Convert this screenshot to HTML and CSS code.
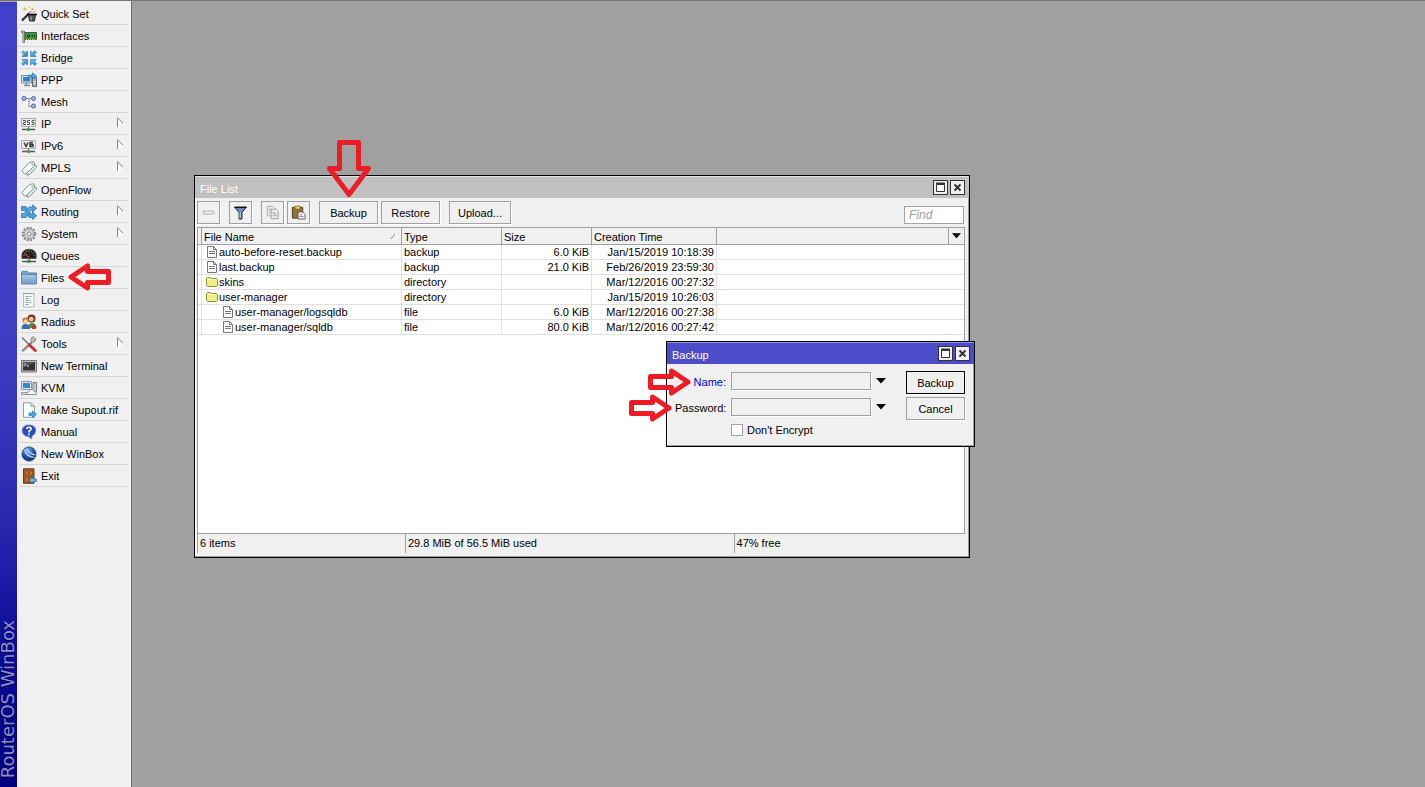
FILE: index.html
```
<!DOCTYPE html>
<html lang="en">
<head>
    <meta charset="utf-8">
    <meta name="viewport" content="width=device-width, initial-scale=1.0">
    <title>RouterOS WinBox</title>
    <link rel="stylesheet" href="styles.css">
</head>
<body>
    <!-- Shared icons -->
    <svg class="defs" aria-hidden="true">
        <defs>
            <linearGradient id="blue" x1="0" y1="0" x2="1" y2="1">
                <stop offset="0" stop-color="#8fd0f5"/>
                <stop offset="1" stop-color="#1d78c8"/>
            </linearGradient>
            <linearGradient id="folderBlue" x1="0" y1="0" x2="0" y2="1">
                <stop offset="0" stop-color="#a9c8e6"/>
                <stop offset="1" stop-color="#6f9bc8"/>
            </linearGradient>
            <radialGradient id="ball" cx="0.4" cy="0.25" r="0.8">
                <stop offset="0" stop-color="#7fb2ee"/>
                <stop offset="0.5" stop-color="#2358b4"/>
                <stop offset="1" stop-color="#0a2462"/>
            </radialGradient>
        </defs>
        <symbol id="tag" viewBox="0 0 16 16">
            <path d="M6 12.5 13.5 5l1.700.3.3 2L8.500 14.500 6 15.200z" fill="#dfeae8" stroke="#7d9490"/>
            <path d="M.8 10.500 8.500 2.600 12 1.800l1.700 1.200-.7 3.200L5 13.800 3.600 14z" fill="#f4faf9" stroke="#7d9490"/>
            <circle cx="11.300" cy="4.300" r=".9" fill="#7d9490"/>
        </symbol>
        <symbol id="doc" viewBox="0 0 12 12">
            <path d="M1.500.5h6l3 3v8h-9z" fill="#fff" stroke="#777"/>
            <path d="M7.500.5v3h3M3 5.500h6M3 7.500h6" fill="none" stroke="#777"/>
        </symbol>
        <symbol id="dir" viewBox="0 0 12 12">
            <path d="M.5 2.500 1.500 1.500h3l1 1h5l1 1v6l-1 1h-9l-1-1z" fill="#f0ee84" stroke="#8f8d3a"/>
            <path d="M1.500 3.500h8" stroke="#fbfac4"/>
        </symbol>
        <symbol id="sub" viewBox="0 0 7 11">
            <path d="M1 1 6 6.500 1 10z" fill="#f8f8f8"/>
            <path d="M1 10.500 6.500 6.500" fill="none" stroke="#fff"/>
            <path d="M.5 10V.8L6 6" fill="none" stroke="#888"/>
        </symbol>
        <symbol id="max" viewBox="0 0 11 11">
            <path d="M1.500 2.500h8v7h-8z" fill="#fff" stroke="#333"/>
            <path d="M1 1.500h9" stroke="#333" stroke-width="2"/>
        </symbol>
        <symbol id="close" viewBox="0 0 11 11">
            <path d="M2.500 2.500l6 6M8.500 2.500l-6 6" stroke="#333" stroke-width="2"/>
        </symbol>
        <symbol id="drop" viewBox="0 0 10 6">
            <path d="M0 0h10L5 5.500z" fill="#000"/>
        </symbol>
        <symbol id="pointer" viewBox="0 0 44 28">
            <path d="M2.500 8.500h21V3L40 14 23.500 25V19.500H2.500z" fill="none" stroke="#ed1c24" stroke-width="5" stroke-linejoin="round"/>
        </symbol>
    </svg>

    <div class="app">
        <div class="brand"><span>RouterOS WinBox</span></div>

        <!-- Main menu -->
        <nav class="menu">
            <button class="item" type="button">
                <svg class="icon" viewBox="0 0 16 16"><path d="M1 14.500 8.500 7" stroke="#333" stroke-width="2.400"/><path d="M8 7.500 10.500 5" stroke="#bbb" stroke-width="2"/><path d="M7.500 8.500h7L13.500 15H8.500z" fill="#555" stroke="#222"/><path d="M6 8.500h10" stroke="#111" stroke-width="1.600"/><path d="M10 10.500v4" stroke="#bbb"/><path d="M4 1v4M2 3h4M11.500 1.500v3M10 3h3M8 .5v1.500" stroke="#e0b83a"/><path d="M12 7l2.500-2" stroke="#888"/></svg>
                <span>Quick Set</span>
            </button>
            <button class="item" type="button">
                <svg class="icon" viewBox="0 0 16 16"><path d="M.5 3h3v11.500H2V4.500H.5z" fill="#ddd" stroke="#777"/><path d="M4 4.500h11.500v7H4z" fill="#49984a" stroke="#2d6d31"/><path d="M6 6.500h3v3H6zM10.500 6.500H12v3h-1.500zM13 6.500h1.500v3H13z" fill="#20522a"/><path d="M5 11.500h10" stroke="#d5cf6a" stroke-dasharray="1 1"/></svg>
                <span>Interfaces</span>
            </button>
            <button class="item" type="button">
                <svg class="icon" viewBox="0 0 16 16"><g fill="url(#blue)" stroke="#2e7fbe" stroke-width=".7"><path d="M.5 2.300 2.300.5l2.200 2.200L6.500.9V6.500H.9l1.800-2z"/><path d="M15.500 2.300 13.700.5l-2.200 2.200L9.500.9V6.500h5.600l-1.800-2z"/><path d="M.5 13.700l1.800 1.800 2.200-2.200 2 1.800V9.500H.9l1.800 2z"/><path d="M15.500 13.700l-1.800 1.800-2.200-2.200-2 1.800V9.500h5.600l-1.800 2z"/></g></svg>
                <span>Bridge</span>
            </button>
            <button class="item" type="button">
                <svg class="icon" viewBox="0 0 16 16"><path d="M.5 3.500h10V11H.5z" fill="#dfe3e8" stroke="#818b95"/><path d="M2 5h7v4.500H2z" fill="#2c83c9"/><path d="M3 13.500h6M5.500 11v2" stroke="#818b95" stroke-width="1.500"/><path d="M11.500 5.500h4v9h-4z" fill="#a8aeb3" stroke="#60686f"/><path d="M12.500 9.500h2M12.500 11.500h2" stroke="#eee"/><path d="M7 7V4.500Q7 3 9 3h2.500V1l4 3-4 3V5H9v2z" fill="#55b1ec" stroke="#1f71ac" stroke-width=".8"/></svg>
                <span>PPP</span>
            </button>
            <button class="item" type="button">
                <svg class="icon" viewBox="0 0 16 16"><path d="M5 4.500h2.500M10 4.500H8v8h2.500" fill="none" stroke="#888"/><g fill="#a8b9f4" stroke="#4658be"><circle cx="3" cy="4.500" r="2"/><circle cx="12.500" cy="4.500" r="2"/><circle cx="12.500" cy="12" r="2"/></g></svg>
                <span>Mesh</span>
            </button>
            <button class="item" type="button">
                <svg class="icon" viewBox="0 0 16 16"><path d="M.5 2.500h14v8H.5z" fill="#eee" stroke="#aaa"/><path d="M2 4.500h2.500v2h-2v2H5M9 4.500H6.500v2h2v2H6M13.500 4.500H11v2h2v2h-2.500" fill="none" stroke="#555"/><path d="M1 13.500h13" stroke="#555" stroke-width="1.500"/><path d="M7.500 11v2" stroke="#555"/><circle cx="7.500" cy="13.500" r="1.700" fill="#38a33b"/></svg>
                <span>IP</span>
                <svg class="more"><use href="#sub"/></svg>
            </button>
            <button class="item" type="button">
                <svg class="icon" viewBox="0 0 16 16"><path d="M.5 2.500h14v8H.5z" fill="#eee" stroke="#aaa"/><path d="M3 4.500l2 4 2-4M12 4.500H9v4h3v-2H9" fill="none" stroke="#333" stroke-width="1.400"/><path d="M1 13.500h13" stroke="#555" stroke-width="1.500"/><path d="M7.500 11v2" stroke="#555"/><circle cx="7.500" cy="13.500" r="1.700" fill="#38a33b"/></svg>
                <span>IPv6</span>
                <svg class="more"><use href="#sub"/></svg>
            </button>
            <button class="item" type="button">
                <svg class="icon"><use href="#tag"/></svg>
                <span>MPLS</span>
                <svg class="more"><use href="#sub"/></svg>
            </button>
            <button class="item" type="button">
                <svg class="icon"><use href="#tag"/></svg>
                <span>OpenFlow</span>
            </button>
            <button class="item" type="button">
                <svg class="icon" viewBox="0 0 16 16"><path d="M.5 2.500H5l5 7.500h1.500V8l4.200 3.800-4.200 3.700v-2H8L3.500 6.500h-3z" fill="#4a9fde" stroke="#1d6cae" stroke-width=".7"/><path d="M.5 13.500H5L10 6h1.500v2l4.200-3.700L11.500.7V3H8l-4.500 6.500h-3z" fill="url(#blue)" stroke="#1d6cae" stroke-width=".7"/></svg>
                <span>Routing</span>
                <svg class="more"><use href="#sub"/></svg>
            </button>
            <button class="item" type="button">
                <svg class="icon" viewBox="0 0 16 16"><circle cx="8" cy="8" r="6.200" fill="none" stroke="#888" stroke-width="2.200" stroke-dasharray="2 1.250"/><circle cx="8" cy="8" r="4.800" fill="#ddd" stroke="#999"/><circle cx="8" cy="8" r="2" fill="#f3f3f3" stroke="#888"/><path d="M8 3.500V6M8 10v2.500M3.500 8H6M10 8h2.500" stroke="#aaa"/></svg>
                <span>System</span>
                <svg class="more"><use href="#sub"/></svg>
            </button>
            <button class="item" type="button">
                <svg class="icon" viewBox="0 0 16 16"><path d="M1 10.500Q-.5 1.500 8 1.200q8.500.3 7 9.300z" fill="#222" stroke="#555"/><path d="M3 8q0-4.800 5-4.800T13 8" fill="none" stroke="#aaa" stroke-dasharray="1 1.500"/><path d="M8 9.500l-4-4" stroke="#e33" stroke-width="1.300"/><path d="M1 13.500h14" stroke="#555" stroke-width="1.500"/><path d="M8 10v3" stroke="#555"/><path d="M6.500 12h3v3h-3z" fill="#3b9a3d"/></svg>
                <span>Queues</span>
            </button>
            <button class="item" type="button">
                <svg class="icon" viewBox="0 0 16 16"><path d="M.5 3.500V2l.8-.6h5L7.500 3h8v10.500H.5z" fill="#7da3ca" stroke="#557fa9"/><path d="M.5 4.500h15V14H.5z" fill="url(#folderBlue)" stroke="#6289b2"/></svg>
                <span>Files</span>
                <svg class="mark mark-files"><use href="#pointer"/></svg>
            </button>
            <button class="item" type="button">
                <svg class="icon" viewBox="0 0 16 16"><path d="M2.500 1.500H13V15H2.500z" fill="#f4f8f6" stroke="#b4bfbb"/><path d="M2 1.500h12" stroke="#777" stroke-dasharray="1 1"/><path d="M4.500 4.500h6M4.500 6.500h3M4.500 8.500h5M4.500 10.500h6M4.500 12.500h4" stroke="#82a39b" stroke-dasharray="3 1"/></svg>
                <span>Log</span>
            </button>
            <button class="item" type="button">
                <svg class="icon" viewBox="0 0 16 16"><circle cx="10.500" cy="4.500" r="4" fill="#69371b"/><circle cx="10.200" cy="5.200" r="2.400" fill="#f0c39a"/><path d="M7 14q0-5 4-5t4.500 5z" fill="#4b8b50"/><circle cx="4.500" cy="6.500" r="3" fill="#bc7623"/><circle cx="4.700" cy="7.400" r="2.200" fill="#f5cea5"/><path d="M.5 15q0-5 4-5T9 15z" fill="#356fae"/><path d="M11 11.500h4V15h-4z" fill="#c83530"/></svg>
                <span>Radius</span>
            </button>
            <button class="item" type="button">
                <svg class="icon" viewBox="0 0 16 16"><path d="M2 14.500 11 6" stroke="#888" stroke-width="2.400" stroke-linecap="round"/><path d="M14.800 2.300l-2.300 2-1-1L13.300 1Q10.500.2 9.800 3q-.5 3.500 2.200 3.500 3.300-.5 2.800-4.200z" fill="#ccc" stroke="#777" stroke-width=".8"/><path d="M1 1.500 8.500 9" stroke="#777" stroke-width="1.600"/><path d="M8.500 9l5.800 5.500" stroke="#d12e2e" stroke-width="3" stroke-linecap="round"/></svg>
                <span>Tools</span>
                <svg class="more"><use href="#sub"/></svg>
            </button>
            <button class="item" type="button">
                <svg class="icon" viewBox="0 0 16 16"><path d="M.5 2.500h15V14H.5z" fill="#bbb" stroke="#777"/><path d="M2 4h12v8.500H2z" fill="#333"/><path d="M2 4h12L2 10z" fill="#575757"/><path d="M3.500 5.500l1.500 1-1.500 1M6 8h2" fill="none" stroke="#eee"/></svg>
                <span>New Terminal</span>
            </button>
            <button class="item" type="button">
                <svg class="icon" viewBox="0 0 16 16"><path d="M.5 1.500h10v8H.5z" fill="#dfe3e8" stroke="#8b959f"/><path d="M2 3h7v5H2z" fill="#3489cc"/><path d="M12 2.500h3.500v9H12z" fill="#c8ccd0" stroke="#737b82"/><path d="M.5 12.500h8v2h-8z" fill="#e8ebee" stroke="#8b959f"/><path d="M6 14.500q-.5-3 2-3 .5-2.500 3-2.200 2 .2 2 2.200 2.700 0 2.500 3z" fill="#f4f7fa" stroke="#8b959f"/></svg>
                <span>KVM</span>
            </button>
            <button class="item" type="button">
                <svg class="icon" viewBox="0 0 16 16"><path d="M2.500.8H10l3.500 3.500v11h-11z" fill="#fbfdfc" stroke="#8da39e"/><path d="M10 .8v3.500h3.500" fill="none" stroke="#8da39e"/><path d="M8 11h3.500V9l4 3.300-4 3.200v-2H8z" fill="#4eaaea" stroke="#1d6fac" stroke-width=".7"/></svg>
                <span>Make Supout.rif</span>
            </button>
            <button class="item" type="button">
                <svg class="icon" viewBox="0 0 16 16"><path d="M8 1q6.500 0 6.800 5.500-.3 4-3.800 5.500l-.5 3-3-2.500Q1.500 12 1.200 6.500 1.500 1 8 1z" fill="#274dbd" stroke="#6482d4" stroke-width=".8"/><path d="M5.700 5Q6 3.200 8 3.200q2.200.1 2.200 1.800Q10 6.300 8 7.200v1.300M8 9.500v1.700" fill="none" stroke="#fff" stroke-width="1.600"/></svg>
                <span>Manual</span>
            </button>
            <button class="item" type="button">
                <svg class="icon" viewBox="0 0 16 16"><circle cx="8" cy="8" r="7.200" fill="url(#ball)" stroke="#254d83" stroke-width=".6"/><path d="M3.500 3.500Q5 10.500 13.500 11.500M6 2.500Q7.500 8 14.300 9" fill="none" stroke="#b9dcfb" stroke-width="1.200"/></svg>
                <span>New WinBox</span>
            </button>
            <button class="item" type="button">
                <svg class="icon" viewBox="0 0 16 16"><path d="M2.500.8h10.500v14.500H2.500z" fill="#a25720" stroke="#6d3c17"/><path d="M4.500 2.500h2.500v5H4.500zM8.500 2.500H11v5H8.500zM4.500 9h2.500v5H4.500z" fill="#c57a3c" stroke="#84481c" stroke-width=".6"/><path d="M15.500 11H12V9l-4 3.300 4 3.200v-2h3.500z" fill="#6bbdf2" stroke="#1d6fac" stroke-width=".7"/></svg>
                <span>Exit</span>
            </button>
        </nav>

        <!-- Desktop with floating windows -->
        <main class="desktop">
            <section class="window file-list">
                <header class="title inactive">
                    <h1>File List</h1>
                    <button class="ctl" type="button" aria-label="Maximize"><svg><use href="#max"/></svg></button>
                    <button class="ctl" type="button" aria-label="Close"><svg><use href="#close"/></svg></button>
                </header>
                <div class="content">
                    <div class="toolbar">
                        <button class="btn tool" type="button" aria-label="Remove"><svg viewBox="0 0 16 16"><path d="M2.500 6.500h11v3h-11z" fill="#f4f4f4" stroke="#aaa"/></svg></button>
                        <button class="btn tool" type="button" aria-label="Filter"><svg viewBox="0 0 16 16"><path d="M2 2.500h12L9.500 8v7h-3V8z" fill="#6f8fc4" stroke="#111" stroke-linejoin="round"/><path d="M1.500 2.500h13" stroke="#111" stroke-width="1.600"/><path d="M7.500 8v6" stroke="#dfe8f7"/></svg></button>
                        <div class="group">
                            <button class="btn tool" type="button" aria-label="Copy"><svg viewBox="0 0 16 16"><path d="M2.500 1.500h6l2 2v8h-8z" fill="#f4f4f4" stroke="#aaa"/><path d="M4 4.500h3M4 6.500h3M4 8.500h3" stroke="#aaa"/><path d="M6.500 4.500h5L14 7v7.500H6.500z" fill="#f8f8f8" stroke="#999"/><path d="M8 7.500h3M8 9.500h4.500M8 11.500h4.500" stroke="#999"/></svg></button>
                            <button class="btn tool" type="button" aria-label="Paste"><svg viewBox="0 0 16 16"><path d="M1.500 2.500h11V14h-11z" fill="#8f7243" stroke="#513c1c"/><path d="M4 1.500h2l1-1 1 1h2v3H4z" fill="#f0ce4e" stroke="#806523"/><path d="M7.500 7.500h5L15 10v5H7.500z" fill="#fff" stroke="#555"/><path d="M9 10.500h3M9 12.500h4.500" stroke="#777"/></svg></button>
                        </div>
                        <div class="group">
                            <button class="btn" type="button">Backup</button>
                            <button class="btn" type="button">Restore</button>
                        </div>
                        <button class="btn" type="button">Upload...</button>
                        <input class="find" type="text" placeholder="Find" aria-label="Find">
                    </div>

                    <div class="grid">
                        <table>
                            <colgroup>
                                <col class="c-flag"><col class="c-name"><col class="c-type"><col class="c-size"><col class="c-time"><col><col class="c-drop">
                            </colgroup>
                            <thead>
                                <tr>
                                    <th></th>
                                    <th><div class="sorted">File Name <svg viewBox="0 0 7 7"><path d="M.5 6.500l5-6" stroke="#888" fill="none"/><path d="M6 .5v6H.5" stroke="#fff" fill="none"/></svg></div></th>
                                    <th>Type</th>
                                    <th>Size</th>
                                    <th>Creation Time</th>
                                    <th></th>
                                    <th class="cols"><button type="button" aria-label="Columns"><svg><use href="#drop"/></svg></button></th>
                                </tr>
                            </thead>
                            <tbody>
                                <tr><td></td><td class="name"><div><svg><use href="#doc"/></svg>auto-before-reset.backup</div></td><td>backup</td><td class="num">6.0 KiB</td><td class="num">Jan/15/2019 10:18:39</td><td colspan="2"></td></tr>
                                <tr><td></td><td class="name"><div><svg><use href="#doc"/></svg>last.backup</div></td><td>backup</td><td class="num">21.0 KiB</td><td class="num">Feb/26/2019 23:59:30</td><td colspan="2"></td></tr>
                                <tr><td></td><td class="name"><div><svg><use href="#dir"/></svg>skins</div></td><td>directory</td><td class="num"></td><td class="num">Mar/12/2016 00:27:32</td><td colspan="2"></td></tr>
                                <tr><td></td><td class="name"><div><svg><use href="#dir"/></svg>user-manager</div></td><td>directory</td><td class="num"></td><td class="num">Jan/15/2019 10:26:03</td><td colspan="2"></td></tr>
                                <tr><td></td><td class="name child"><div><svg><use href="#doc"/></svg>user-manager/logsqldb</div></td><td>file</td><td class="num">6.0 KiB</td><td class="num">Mar/12/2016 00:27:38</td><td colspan="2"></td></tr>
                                <tr><td></td><td class="name child"><div><svg><use href="#doc"/></svg>user-manager/sqldb</div></td><td>file</td><td class="num">80.0 KiB</td><td class="num">Mar/12/2016 00:27:42</td><td colspan="2"></td></tr>
                            </tbody>
                        </table>
                    </div>

                    <footer class="status">
                        <span>6 items</span>
                        <span>29.8 MiB of 56.5 MiB used</span>
                        <span>47% free</span>
                    </footer>
                </div>
            </section>

            <section class="window backup">
                <header class="title">
                    <h2>Backup</h2>
                    <button class="ctl" type="button" aria-label="Maximize"><svg><use href="#max"/></svg></button>
                    <button class="ctl" type="button" aria-label="Close"><svg><use href="#close"/></svg></button>
                </header>
                <form class="form">
                    <div class="fields">
                        <label class="changed" for="name">Name:</label>
                        <input class="text" id="name" type="text">
                        <button class="drop" type="button" aria-label="Name options"><svg><use href="#drop"/></svg></button>
                        <label for="password">Password:</label>
                        <input class="text" id="password" type="password">
                        <button class="drop" type="button" aria-label="Password options"><svg><use href="#drop"/></svg></button>
                        <div class="check">
                            <input id="encrypt" type="checkbox">
                            <label for="encrypt">Don't Encrypt</label>
                        </div>
                    </div>
                    <div class="actions">
                        <button class="btn default" type="button">Backup</button>
                        <button class="btn" type="button">Cancel</button>
                    </div>
                </form>
            </section>

            <!-- Red pointers -->
            <svg class="mark mark-backup" viewBox="0 0 46 60"><path d="M13.500 3.500h19v26h10L23 55.500 3.500 29.500h10z" fill="none" stroke="#ed1c24" stroke-width="5" stroke-linejoin="round"/></svg>
            <svg class="mark mark-name"><use href="#pointer"/></svg>
            <svg class="mark mark-password"><use href="#pointer"/></svg>
        </main>
    </div>
</body>
</html>
```

FILE: styles.css
```
* {
    box-sizing: border-box;
}
body {
    margin: 0;
    background: #a0a0a0;
    color: #000;
    font-family: "Liberation Sans", Arial, sans-serif;
    font-size: 11px;
    line-height: 14px;
}
button, input {
    font: inherit;
    color: inherit;
    margin: 0;
    padding: 0;
    border-radius: 0;
}
svg {
    display: block;
    flex: none;
}
.defs {
    position: absolute;
    width: 0;
    height: 0;
}
.app {
    display: flex;
    min-height: 100vh;
    border-top: 1px solid #787878;
}

/* Left side */
.brand {
    width: 17px;
    margin-top: 1px;
    display: flex;
    align-items: flex-end;
    padding-bottom: 9px;
    background: linear-gradient(#4040c8, #4040c4 40%, #2a2ab0 65%, #0c0c98 82%, #000080);
}
.brand span {
    writing-mode: vertical-rl;
    transform: rotate(180deg);
    font-family: "DejaVu Sans", sans-serif;
    font-size: 18px;
    line-height: 15px;
    white-space: nowrap;
    color: #8c8ccc;
    text-shadow: -1px -1px 1px #000040;
}
.menu {
    width: 115px;
    padding: 2px 2px 0;
    background: #f0f0f0;
    border-right: 1px solid #707070;
}
.item {
    position: relative;
    display: flex;
    align-items: center;
    gap: 4px;
    width: 100%;
    height: 22px;
    padding: 0 5px 0 2px;
    border: none;
    border-bottom: 1px solid #d6d6d6;
    background: none;
    text-align: left;
    white-space: nowrap;
}
.icon {
    width: 16px;
    height: 16px;
}
.more {
    width: 7px;
    height: 11px;
    margin-left: auto;
    margin-bottom: 3px;
}

/* Windows */
.desktop {
    position: relative;
    flex: 1;
}
.window {
    position: absolute;
    display: flex;
    flex-direction: column;
    border: 1px solid #000;
    background: #f0f0f0;
    box-shadow: inset -1px -1px #a0a0a0, inset 1px 1px #fff;
}
.file-list {
    left: 62px;
    top: 174px;
    width: 776px;
    height: 383px;
}
.backup {
    left: 534px;
    top: 340px;
    width: 309px;
    height: 106px;
}
.title {
    display: flex;
    align-items: center;
    gap: 2px;
    height: 22px;
    padding: 0 4px 0 5px;
    background: #4d4dcb;
    border-top: 1px solid #9090e0;
    color: #fff;
}
.title.inactive {
    background: #c0c0c0;
    border-top-color: #e4e4e4;
}
.title h1, .title h2 {
    flex: 1;
    margin: 0;
    padding-top: 3px;
    font-size: 11px;
    font-weight: normal;
}
.ctl {
    width: 15px;
    height: 15px;
    padding: 1px;
    border: 1px solid #333;
    background: #f0f0f0;
}
.ctl svg {
    width: 11px;
    height: 11px;
}
.content {
    flex: 1;
    display: flex;
    flex-direction: column;
    padding: 0 4px 4px 2px;
}
.toolbar {
    display: flex;
    gap: 9px;
    padding: 3px 1px 3px 0;
}
.group {
    display: flex;
    gap: 3px;
}
.btn {
    height: 23px;
    min-width: 59px;
    padding: 0 8px;
    border: 1px solid #a0a0a0;
    background: #f0f0f0;
    box-shadow: 1px 1px #fff;
}
.btn.tool {
    min-width: 0;
    width: 23px;
    padding: 0 3px;
}
.tool svg {
    width: 15px;
    height: 15px;
}
.find {
    width: 60px;
    height: 18px;
    margin: 5px 0 0 auto;
    padding: 0 4px;
    border: 1px solid #a0a0a0;
    background: #fff;
    font-size: 12px;
    font-style: italic;
}
.find::placeholder {
    color: #a0a0a0;
}

/* File table */
.grid {
    flex: 1;
    border: 1px solid #a0a0a0;
    background: #fff;
}
table {
    width: 100%;
    table-layout: fixed;
    border-collapse: separate;
    border-spacing: 0;
    white-space: nowrap;
}
.c-flag {
    width: 4px;
}
.c-name {
    width: 200px;
}
.c-type {
    width: 100px;
}
.c-size {
    width: 90px;
}
.c-time {
    width: 125px;
}
.c-drop {
    width: 15px;
}
th {
    height: 17px;
    padding: 1px 0 0 2px;
    border-right: 1px solid #a0a0a0;
    border-bottom: 1px solid #a0a0a0;
    background: #f0f0f0;
    font-weight: normal;
    text-align: left;
}
th:first-child, td:first-child {
    padding: 0;
}
th.cols {
    padding: 0;
    border-right: none;
}
.cols button {
    display: block;
    padding: 0 3px;
    border: none;
    background: none;
}
.cols svg {
    width: 9px;
    height: 6px;
}
.sorted {
    display: flex;
    align-items: center;
    justify-content: space-between;
    padding-right: 4px;
}
.sorted svg {
    width: 7px;
    height: 7px;
}
td {
    height: 15px;
    padding: 0 2px;
    border-right: 1px solid #e0e0e0;
    border-bottom: 1px solid #e0e0e0;
}
td:last-child {
    border-right: none;
}
.num {
    text-align: right;
}
.name div {
    display: flex;
    align-items: center;
    gap: 1px;
    padding-left: 2px;
}
.name svg {
    width: 12px;
    height: 12px;
}
.child div {
    padding-left: 18px;
}
.status {
    display: flex;
    height: 19px;
}
.status span {
    flex: 231;
    padding: 2px;
    border-left: 1px solid #a0a0a0;
}
.status span:first-child {
    flex: 207;
}
.status span:nth-child(2) {
    flex: 330;
}

/* Backup dialog */
.form {
    flex: 1;
    display: flex;
    justify-content: space-between;
    padding: 7px 9px 0 8px;
}
.fields {
    display: grid;
    grid-template-columns: 51px 140px 10px;
    grid-template-rows: 26px 26px 12px;
    column-gap: 5px;
    align-items: start;
    text-align: right;
}
.fields > label {
    padding-top: 4px;
}
.changed {
    color: #0000d0;
}
.text {
    width: 100%;
    height: 18px;
    margin-top: 1px;
    padding: 0 3px;
    border: 1px solid #a0a0a0;
    background: #f0f0f0;
    box-shadow: 1px 1px #fff;
}
.drop {
    margin-top: 7px;
    border: none;
    background: none;
}
.drop svg {
    width: 10px;
    height: 6px;
}
.check {
    grid-column: 2;
    display: flex;
    align-items: center;
    gap: 4px;
}
.check input {
    appearance: none;
    width: 12px;
    height: 12px;
    border: 1px solid #a0a0a0;
    background: #fff;
}
.check input:checked {
    background: #4d4dcb;
}
.actions {
    display: flex;
    flex-direction: column;
    gap: 3px;
}
.btn.default {
    border-color: #000;
}

/* Red pointers */
.mark {
    position: absolute;
    width: 44px;
    height: 28px;
    pointer-events: none;
}
.mark-files {
    left: 48px;
    top: -4px;
    transform: rotate(180deg);
}
.mark-backup {
    left: 194px;
    top: 138px;
    width: 46px;
    height: 60px;
}
.mark-name {
    left: 516px;
    top: 367px;
}
.mark-password {
    left: 497px;
    top: 393px;
}
```
